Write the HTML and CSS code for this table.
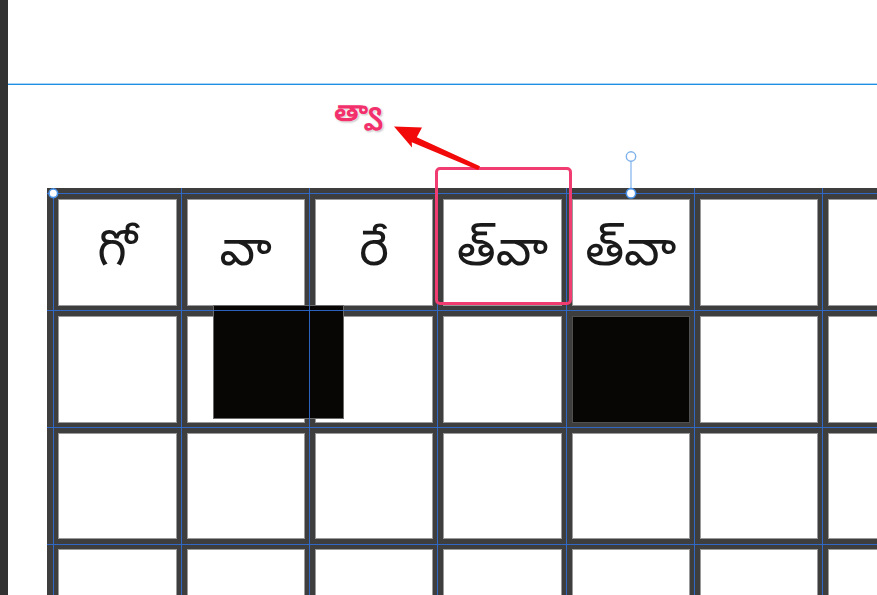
FILE: index.html
```html
<!DOCTYPE html>
<html lang="te">
<head>
<meta charset="utf-8">
<title>Grid</title>
<link rel="stylesheet" href="styles.css">
</head>
<body>
<div class="app">
  <aside class="rail"></aside>
  <main class="canvas">
    <div class="guide"></div>
    <div class="board">
      <div class="grid">
        <div class="cell">గో</div>
        <div class="cell">వా</div>
        <div class="cell">రే</div>
        <div class="cell">త్&zwnj;వా</div>
        <div class="cell">త్&zwnj;వా</div>
        <div class="cell"></div>
        <div class="cell"></div>

        <div class="cell"></div>
        <div class="cell"></div>
        <div class="cell"></div>
        <div class="cell"></div>
        <div class="cell cell-black"></div>
        <div class="cell"></div>
        <div class="cell"></div>

        <div class="cell"></div>
        <div class="cell"></div>
        <div class="cell"></div>
        <div class="cell"></div>
        <div class="cell"></div>
        <div class="cell"></div>
        <div class="cell"></div>

        <div class="cell"></div>
        <div class="cell"></div>
        <div class="cell"></div>
        <div class="cell"></div>
        <div class="cell"></div>
        <div class="cell"></div>
        <div class="cell"></div>
      </div>
      <div class="blob"></div>
      <div class="guides"></div>
      <div class="focus"></div>
    </div>
    <span class="label">త్వా</span>
    <svg class="overlay" viewBox="8 0 869 595" width="869" height="595" aria-hidden="true">
      <polygon points="394,126.5 422,127.5 416.8,137.2 480,166.2 478,170 411.8,142.2 412,147.5" fill="#f20a0a"/>
      <line x1="631" y1="161" x2="631" y2="188" stroke="#7fb2ec" stroke-width="1.2"/>
      <circle cx="631" cy="156.5" r="4.7" fill="#fff" stroke="#7fb2ec" stroke-width="1.4"/>
      <circle cx="631" cy="193.3" r="4.7" fill="#fff" stroke="#4a92e8" stroke-width="1.6"/>
      <circle cx="53.3" cy="193.3" r="4.3" fill="#fff" stroke="#4a92e8" stroke-width="1.6"/>
    </svg>
  </main>
</div>
</body>
</html>
```

FILE: styles.css
```css
html, body {
  margin: 0;
  padding: 0;
  width: 877px;
  height: 595px;
  overflow: hidden;
  background: #ffffff;
  font-family: "Noto Sans Telugu", "Noto Sans", "DejaVu Sans", sans-serif;
}

.app {
  display: flex;
  width: 877px;
  height: 595px;
}

.rail {
  flex: 0 0 8px;
  background: #323232;
}

.canvas {
  flex: 1;
  position: relative;
  overflow: hidden;
  background: #ffffff;
}

.guide {
  margin-top: 84px;
  height: 1px;
  background: #1f8fe4;
  box-shadow: 0 -1px 0 #a9d3f3;
}

.board {
  position: relative;
  margin-left: 39.33px;
  margin-top: 103.33px;
  width: max-content;
}

.grid {
  display: grid;
  grid-template-columns: repeat(7, 116.33px);
  grid-auto-rows: 104.67px;
  gap: 12px;
  padding: 12px;
  background: #3e3e3e;
}

.cell {
  background: #ffffff;
  box-shadow: 0 0 0 1px #9a9a9a;
  display: flex;
  align-items: center;
  justify-content: center;
  padding-top: 6px;
  box-sizing: border-box;
  font-size: 50px;
  font-weight: 400;
  color: #1a1a1a;
  line-height: 1;
}

.cell-black {
  background: #070604;
  box-shadow: 0 0 0 1px #505050;
}

.blob {
  position: absolute;
  left: 166.67px;
  top: 117.67px;
  width: 129px;
  height: 112px;
  background: #070604;
  box-shadow: 0 0 0 1px #6a6a6a;
}

.guides {
  position: absolute;
  inset: 0;
  pointer-events: none;
  background-image:
    repeating-linear-gradient(to right, transparent 0 5.5px, rgba(46, 108, 210, 0.9) 5.5px 6.5px, transparent 6.5px 128.33px),
    repeating-linear-gradient(to bottom, transparent 0 5.5px, rgba(46, 108, 210, 0.9) 5.5px 6.5px, transparent 6.5px 116.67px);
}

.focus {
  position: absolute;
  left: 387.67px;
  top: -21px;
  width: 131px;
  height: 132px;
  border: 3px solid #f03c70;
  border-radius: 5px;
}

.label {
  position: absolute;
  left: 326px;
  top: 100px;
  font-size: 28px;
  font-weight: 700;
  color: #f2306c;
  line-height: 1.2;
  text-shadow: 0 0 2px #fff, 0 0 2px #fff, 1px 1px 2px rgba(0, 0, 0, 0.35);
}

.overlay {
  position: absolute;
  left: 0;
  top: 0;
  pointer-events: none;
}
```
